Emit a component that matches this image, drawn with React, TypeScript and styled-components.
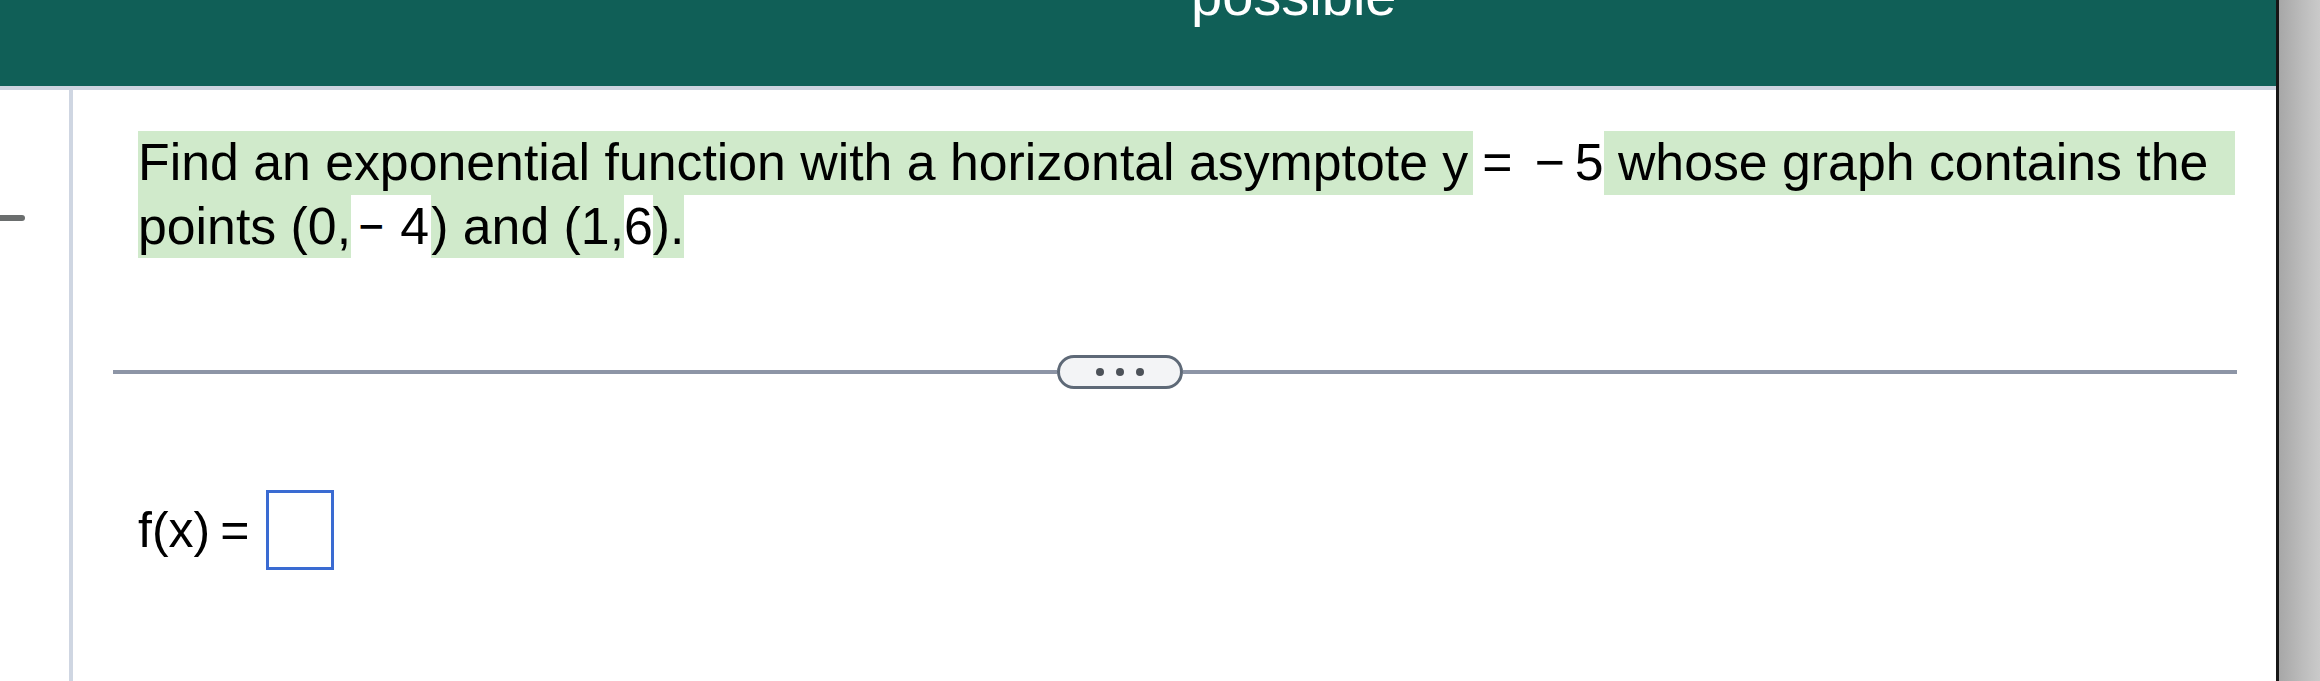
import React from "react";
import styled, { createGlobalStyle } from "styled-components";

const GlobalStyle = createGlobalStyle`
  html, body {
    margin: 0;
    padding: 0;
    background: #ffffff;
  }
  body {
    font-family: "Liberation Sans", Arial, Helvetica, sans-serif;
    color: #000;
  }
`;

const Page = styled.div`
  display: flex;
  flex-direction: row;
  width: 100%;
  height: 100vh;
  overflow: hidden;
`;

const Window = styled.div`
  flex: 1;
  display: flex;
  flex-direction: column;
  background: #ffffff;
  min-width: 0;
`;

const Gutter = styled.div`
  width: 41px;
  flex-shrink: 0;
  border-left: 3px solid #161616;
  background: linear-gradient(90deg, #a7a7a7 0%, #bdbdbd 60%, #cacaca 100%);
`;

const Header = styled.header`
  height: 86px;
  flex-shrink: 0;
  background: #105f57;
  border-bottom: 4px solid #cdd3df;
  overflow: hidden;
  display: flex;
  align-items: flex-start;
  padding-left: 1191px;
`;

const HeaderTitle = styled.div`
  color: #ffffff;
  font-size: 56px;
  line-height: 56px;
  margin-top: -32px;
  white-space: nowrap;
`;

const Body = styled.div`
  flex: 1;
  display: flex;
  flex-direction: row;
  min-height: 0;
`;

const Rail = styled.div`
  width: 69px;
  flex-shrink: 0;
  border-right: 4px solid #cfd6e2;
  padding-top: 125px;
  box-sizing: content-box;
`;

const Dash = styled.div`
  width: 25px;
  height: 6px;
  background: #6b6e6e;
  border-radius: 0 3px 3px 0;
`;

const Content = styled.main`
  flex: 1;
  display: flex;
  flex-direction: column;
  padding: 41px 39px 0 40px;
  min-width: 0;
`;

const Question = styled.div`
  padding-left: 25px;
  font-size: 51.8px;
  line-height: 63.5px;
`;

const Line = styled.div`
  height: 63.5px;
  white-space: pre;
`;

const Seg = styled.span<{ $hl?: boolean; $padRight?: number }>`
  display: inline-block;
  height: 63.5px;
  vertical-align: top;
  background: ${(p) => (p.$hl ? "#d0eacb" : "transparent")};
  padding-right: ${(p) => p.$padRight ?? 0}px;
`;

const MathGlyph = styled.span<{ $ml?: number; $mr?: number; $sx?: number }>`
  display: inline-block;
  margin-left: ${(p) => p.$ml ?? 0}px;
  margin-right: ${(p) => p.$mr ?? 0}px;
  transform: scaleX(${(p) => p.$sx ?? 1});
  transform-origin: center;
`;

const DividerRow = styled.div`
  margin-top: 97px;
  height: 34px;
  display: flex;
  align-items: center;
`;

const Rule = styled.div<{ $width?: number }>`
  height: 4px;
  background: #8d95a6;
  ${(p) => (p.$width ? `width: ${p.$width}px; flex-shrink: 0;` : "flex: 1;")}
`;

const Pill = styled.button`
  box-sizing: border-box;
  width: 126px;
  height: 34px;
  flex-shrink: 0;
  border: 3px solid #5e6977;
  border-radius: 17px;
  background: #f3f4f6;
  padding: 0;
  display: flex;
  align-items: center;
  justify-content: center;
  gap: 12px;
  cursor: pointer;
`;

const Dot = styled.span`
  width: 8px;
  height: 8px;
  border-radius: 50%;
  background: #4d5259;
`;

const AnswerRow = styled.div`
  margin-top: 101px;
  padding-left: 25px;
  display: flex;
  align-items: center;
  font-size: 50px;
  line-height: 50px;
`;

const AnswerLabel = styled.span`
  white-space: nowrap;
`;

const Equals = styled.span`
  margin-left: 10px;
  margin-right: 17px;
`;

const AnswerBox = styled.div`
  box-sizing: border-box;
  width: 68px;
  height: 80px;
  border: 3px solid #3a6bd2;
  background: #ffffff;
`;

export default function App() {
  return (
    <>
      <GlobalStyle />
      <Page>
        <Window>
          <Header>
            <HeaderTitle>possible</HeaderTitle>
          </Header>
          <Body>
            <Rail>
              <Dash />
            </Rail>
            <Content>
              <Question>
                <Line>
                  <Seg $hl $padRight={5}>
                    Find an exponential function with a horizontal asymptote y
                  </Seg>
                  <Seg>
                    <MathGlyph $ml={9}>=</MathGlyph>
                    <MathGlyph $ml={22}>−</MathGlyph>
                    <MathGlyph $ml={10}>5</MathGlyph>
                  </Seg>
                  <Seg $hl $padRight={27}>
                    {" whose graph contains the"}
                  </Seg>
                </Line>
                <Line>
                  <Seg $hl>points (0,</Seg>
                  <Seg>
                    <MathGlyph $ml={5} $sx={0.85}>
                      −
                    </MathGlyph>
                    <MathGlyph $ml={14} $mr={2}>
                      4
                    </MathGlyph>
                  </Seg>
                  <Seg $hl>) and (1,</Seg>
                  <Seg>6</Seg>
                  <Seg $hl>).</Seg>
                </Line>
              </Question>
              <DividerRow>
                <Rule $width={944} />
                <Pill aria-label="Show more">
                  <Dot />
                  <Dot />
                  <Dot />
                </Pill>
                <Rule />
              </DividerRow>
              <AnswerRow>
                <AnswerLabel>f(x)</AnswerLabel>
                <Equals>=</Equals>
                <AnswerBox />
              </AnswerRow>
            </Content>
          </Body>
        </Window>
        <Gutter />
      </Page>
    </>
  );
}
